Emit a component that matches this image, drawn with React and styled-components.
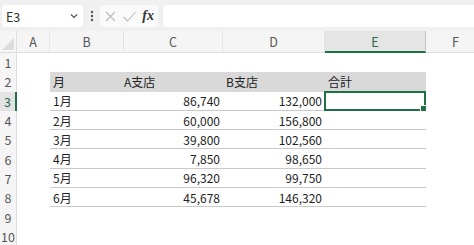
import styled, { createGlobalStyle } from "styled-components";

const GlobalStyle = createGlobalStyle`
  html, body {
    margin: 0;
    padding: 0;
    background: #fff;
    overflow: hidden;
  }
  body {
    font-family: "Noto Sans CJK JP", "Noto Sans", sans-serif;
    color: #222;
  }
`;

const cols = ["A", "B", "C", "D", "E", "F"];
const data = [
  ["1月", "86,740", "132,000"],
  ["2月", "60,000", "156,800"],
  ["3月", "39,800", "102,560"],
  ["4月", "7,850", "98,650"],
  ["5月", "96,320", "99,750"],
  ["6月", "45,678", "146,320"],
];

const Page = styled.div`
  width: 474px;
  height: 245px;
  display: flex;
  flex-direction: column;
  overflow: hidden;
`;

// 数式バー
const Toolbar = styled.div`
  height: 31px;
  flex-shrink: 0;
  background: #f0f0f0;
  display: flex;
  align-items: center;
  padding: 1px 0 0 2px;
  box-sizing: border-box;
`;
const NameBox = styled.div`
  width: 81px;
  height: 22px;
  background: #fff;
  border-radius: 4px;
  display: flex;
  align-items: center;
  justify-content: space-between;
  padding: 0 4px;
  box-sizing: border-box;
  font-size: 12.5px;
  color: #333;
`;
const Dots = styled.div`
  width: 17px;
  display: flex;
  justify-content: center;
`;
const FxBox = styled.div`
  width: 58px;
  height: 22px;
  background: #fafafa;
  border-radius: 4px;
  display: flex;
  align-items: center;
  justify-content: space-between;
  padding: 0 4px;
  box-sizing: border-box;
`;
const Fx = styled.span`
  font-family: "Liberation Serif", serif;
  font-style: italic;
  font-weight: bold;
  font-size: 14px;
  color: #333;
`;
const Formula = styled.div`
  flex: 1;
  height: 22px;
  margin-left: 5px;
  background: #fff;
  border-radius: 4px 0 0 4px;
`;

const Grid = styled.div`
  display: grid;
  grid-template-columns: 17px 33px 74px 99px 102px 101px 60px;
  grid-template-rows: 22px repeat(10, 19.3px);
  font-size: 12px;
`;
const Corner = styled.div`
  background: #f5f5f5;
  border-right: 1px solid #dedede;
  border-bottom: 1px solid #dedede;
  position: relative;
  box-sizing: border-box;
`;
const ColHead = styled.div`
  background: ${(p) => (p.$active ? "#e5e5e5" : "#f5f5f5")};
  border-right: 1px solid ${(p) => (p.$active ? "#c6c6c6" : "#e3e3e3")};
  border-bottom: ${(p) => (p.$active ? "2px solid #1e7145" : "1px solid #dedede")};
  box-sizing: border-box;
  display: flex;
  align-items: center;
  justify-content: center;
  color: ${(p) => (p.$active ? "#2a6a47" : "#555")};
  font-size: 12.5px;
  padding-top: ${(p) => (p.$active ? "1px" : "0")};
`;
const RowHead = styled.div`
  background: ${(p) => (p.$active ? "#e3e3e3" : "#f5f5f5")};
  border-right: ${(p) => (p.$active ? "2px solid #1e7145" : "1px solid #dedede")};
  box-sizing: border-box;
  display: flex;
  align-items: center;
  justify-content: center;
  color: ${(p) => (p.$active ? "#2a6a47" : "#555")};
  font-size: 12.5px;
`;
const Cell = styled.div`
  box-sizing: border-box;
  display: flex;
  align-items: center;
  justify-content: ${(p) => (p.$num ? "flex-end" : "flex-start")};
  padding: 0 3px;
  background: ${(p) => (p.$head ? "#d9d9d9" : "#fff")};
  border-bottom: ${(p) => (p.$line ? "1px solid #c9c9c9" : "none")};
  color: #222;
  white-space: nowrap;
  position: relative;
`;
const Selected = styled.div`
  position: absolute;
  inset: -1px 0 -1px -1px;
  border: 2px solid #1e7145;
  pointer-events: none;
`;
const Handle = styled.div`
  position: absolute;
  right: -3px;
  bottom: -3px;
  width: 5px;
  height: 5px;
  background: #1e7145;
  border: 1px solid #fff;
`;

const Chevron = () => (
  <svg width="10" height="10" viewBox="0 0 10 10">
    <path d="M2 3.5 L5 6.5 L8 3.5" fill="none" stroke="#555" strokeWidth="1.2" />
  </svg>
);

const Cross = () => (
  <svg width="13" height="13" viewBox="0 0 13 13">
    <path d="M2 2 L11 11 M11 2 L2 11" stroke="#bbb" strokeWidth="1.1" />
  </svg>
);

const Check = () => (
  <svg width="15" height="13" viewBox="0 0 15 13">
    <path d="M1.5 7 L5.5 11 L13.5 2" fill="none" stroke="#bbb" strokeWidth="1.1" />
  </svg>
);

const VDots = () => (
  <svg width="4" height="12" viewBox="0 0 4 12">
    <circle cx="2" cy="2" r="1.2" fill="#555" />
    <circle cx="2" cy="6" r="1.2" fill="#555" />
    <circle cx="2" cy="10" r="1.2" fill="#555" />
  </svg>
);

const Tri = () => (
  <svg
    width="12"
    height="12"
    viewBox="0 0 12 12"
    style={{ position: "absolute", right: 2, bottom: 2 }}
  >
    <path d="M12 0 L12 12 L0 12 Z" fill="#dcdcdc" />
  </svg>
);

const renderRow = (r) => {
  const cells = [];
  // A列
  cells.push(<Cell key="a" />);
  if (r === 2) {
    cells.push(<Cell key="b" $head>月</Cell>);
    cells.push(<Cell key="c" $head style={{ paddingLeft: 0 }}>A支店</Cell>);
    cells.push(<Cell key="d" $head>B支店</Cell>);
    cells.push(<Cell key="e" $head>合計</Cell>);
  } else if (r >= 3 && r <= 8) {
    const [m, a, b] = data[r - 3];
    cells.push(<Cell key="b" $line>{m}</Cell>);
    cells.push(<Cell key="c" $line $num>{a}</Cell>);
    cells.push(<Cell key="d" $line $num>{b}</Cell>);
    cells.push(
      <Cell key="e" $line>
        {r === 3 && (
          <Selected>
            <Handle />
          </Selected>
        )}
      </Cell>
    );
  } else {
    cells.push(<Cell key="b" />, <Cell key="c" />, <Cell key="d" />, <Cell key="e" />);
  }
  cells.push(<Cell key="f" />);
  return cells;
};

export default function App() {
  const rows = [1, 2, 3, 4, 5, 6, 7, 8, 9, 10];
  return (
    <Page>
      <GlobalStyle />
      <Toolbar>
        <NameBox>
          <span>E3</span>
          <Chevron />
        </NameBox>
        <Dots>
          <VDots />
        </Dots>
        <FxBox>
          <Cross />
          <Check />
          <Fx>fx</Fx>
        </FxBox>
        <Formula />
      </Toolbar>
      <Grid>
        <Corner>
          <Tri />
        </Corner>
        {cols.map((c) => (
          <ColHead key={c} $active={c === "E"}>
            {c}
          </ColHead>
        ))}
        {rows.map((r) => [
          <RowHead key={"h" + r} $active={r === 3}>
            {r}
          </RowHead>,
          ...renderRow(r).map((el) => ({ ...el, key: r + "-" + el.key })),
        ])}
      </Grid>
    </Page>
  );
}
